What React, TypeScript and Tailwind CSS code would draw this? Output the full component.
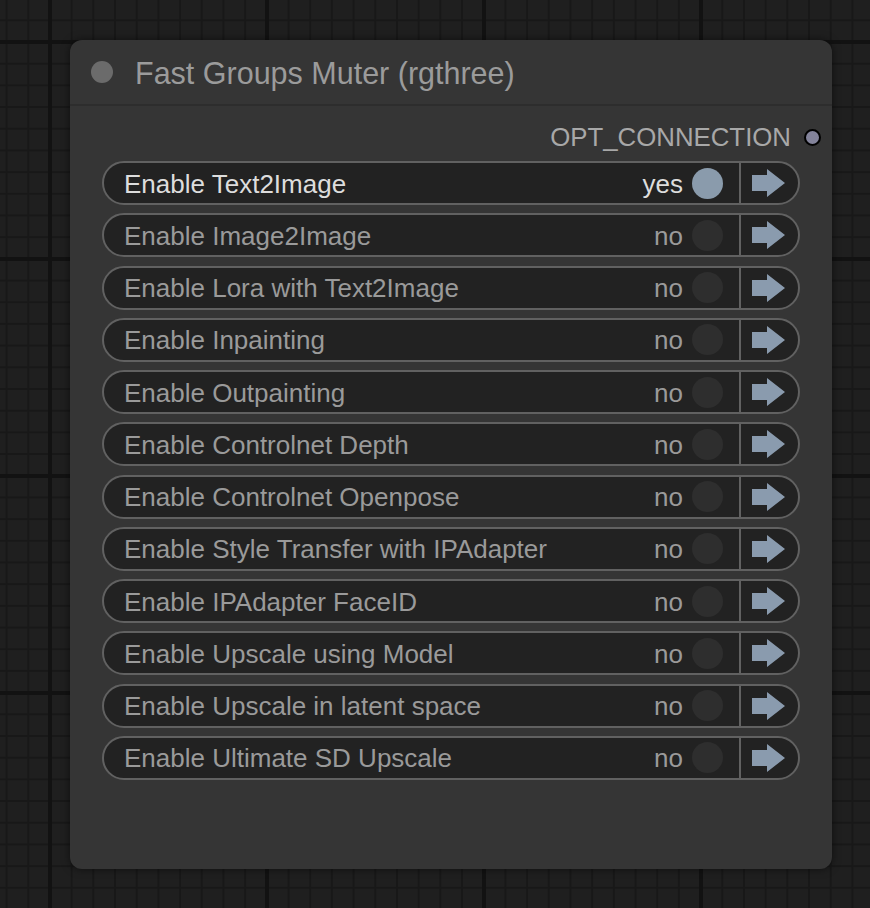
import React from 'react';

const groups = [
  { label: 'Enable Text2Image', on: true },
  { label: 'Enable Image2Image', on: false },
  { label: 'Enable Lora with Text2Image', on: false },
  { label: 'Enable Inpainting', on: false },
  { label: 'Enable Outpainting', on: false },
  { label: 'Enable Controlnet Depth', on: false },
  { label: 'Enable Controlnet Openpose', on: false },
  { label: 'Enable Style Transfer with IPAdapter', on: false },
  { label: 'Enable IPAdapter FaceID', on: false },
  { label: 'Enable Upscale using Model', on: false },
  { label: 'Enable Upscale in latent space', on: false },
  { label: 'Enable Ultimate SD Upscale', on: false },
];

function Arrow() {
  return (
    <svg width="34" height="28" viewBox="0 0 34 28" className="shrink-0">
      <path d="M0 6H15V0L33 14L15 28V22H0Z" fill="#8a9bae" />
    </svg>
  );
}

function GroupRow({ label, on }: { label: string; on: boolean }) {
  return (
    <div className="flex h-[44px] items-center rounded-full border-2 border-[#616161] bg-[#222222]">
      <span className={`flex-1 truncate pl-[20px] pt-[2px] text-[26px] ${on ? 'text-[#dddddd]' : 'text-[#9a9a9a]'}`}>
        {label}
      </span>
      <span className={`pt-[2px] text-[26px] ${on ? 'text-[#dddddd]' : 'text-[#9a9a9a]'}`}>{on ? 'yes' : 'no'}</span>
      <span
        className={`ml-[9px] mr-[16px] h-[31px] w-[31px] rounded-full ${on ? 'bg-[#8a9bac]' : 'bg-[#2e2e2e]'}`}
      />
      <div className="flex h-full w-[59px] items-center justify-center border-l-2 border-[#616161] pr-[2px]">
        <Arrow />
      </div>
    </div>
  );
}

export default function App() {
  return (
    <div
      className="h-[908px] w-full overflow-hidden bg-[#1f1f1f] pl-[70px] pt-[40px] font-['Liberation_Sans',Arial,sans-serif] bg-[linear-gradient(to_right,#121212_4px,transparent_4px),linear-gradient(to_bottom,#121212_4px,transparent_4px),linear-gradient(to_right,#181818_2px,transparent_2px),linear-gradient(to_bottom,#181818_2px,transparent_2px)] bg-[size:217px_217px,217px_217px,21.7px_21.7px,21.7px_21.7px] bg-[position:48px_40px,48px_40px,5.6px_19.3px,5.6px_19.3px]"
    >
      <div className="flex h-[829px] w-[762px] flex-col rounded-[12px] bg-[#353535] shadow-[0_0_8px_rgba(0,0,0,0.55)]">
        <div className="flex h-[66px] shrink-0 items-center border-b-2 border-[#2d2d2d] pl-[21px]">
          <span className="h-[22px] w-[22px] rounded-full bg-[#6b6b6b]" />
          <span className="ml-[22px] pt-[2px] text-[30.5px] leading-none text-[#9b9b9b]">Fast Groups Muter (rgthree)</span>
        </div>
        <div className="flex flex-col px-[32px]">
          <div className="mt-[16px] mb-[9px] flex h-[30px] items-center justify-end -mr-[21px]">
            <span className="text-[25.8px] text-[#a8a8a8]">OPT_CONNECTION</span>
            <span className="ml-[13px] h-[17px] w-[17px] rounded-full border-2 border-black bg-[#83839a]" />
          </div>
          <div className="flex flex-col gap-[8.27px]">
            {groups.map((g) => (
              <GroupRow key={g.label} label={g.label} on={g.on} />
            ))}
          </div>
        </div>
      </div>
    </div>
  );
}
